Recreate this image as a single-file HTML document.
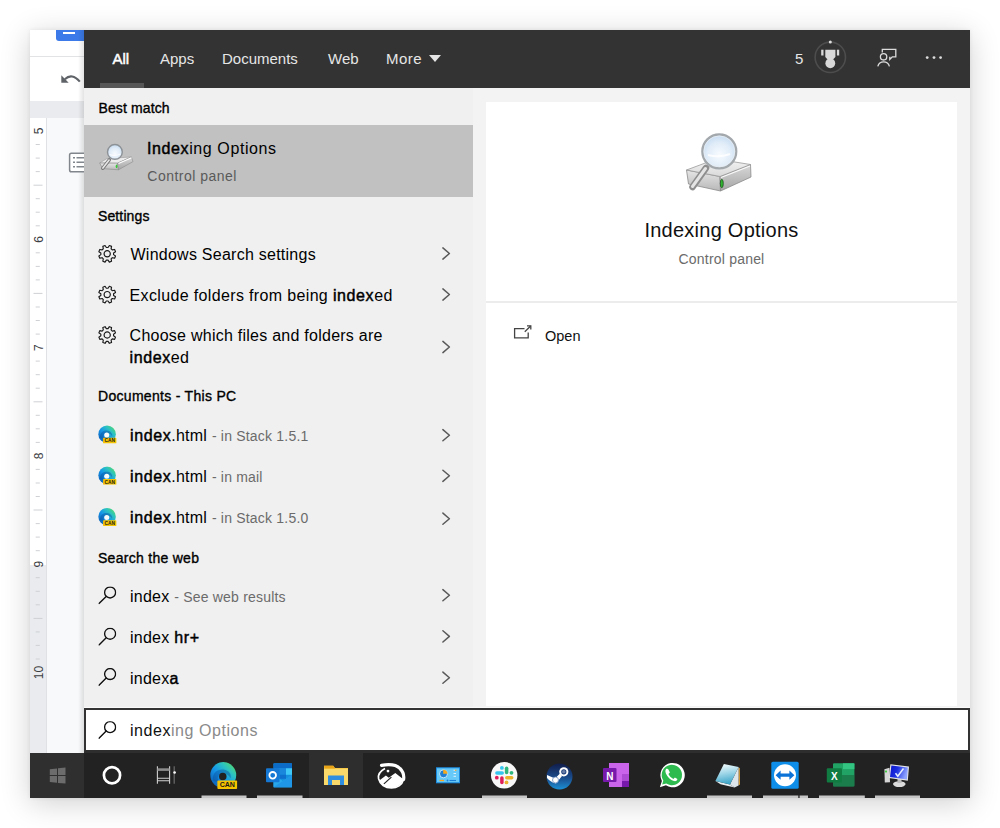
<!DOCTYPE html>
<html><head><meta charset="utf-8">
<style>
*{margin:0;padding:0;box-sizing:border-box}
html,body{width:1000px;height:828px;background:#fff;overflow:hidden;font-family:"Liberation Sans",sans-serif}
.a{position:absolute}
.t{position:absolute;line-height:1;white-space:nowrap}
.sb{font-size:14px;-webkit-text-stroke:0.35px #000;letter-spacing:0.12px;color:#000}
.r{font-size:16px;color:#000;letter-spacing:0.25px}
b{font-weight:400;-webkit-text-stroke:0.45px currentColor;letter-spacing:0.6px}
.g{font-size:14px;color:#6b6b6b;letter-spacing:0.2px}
#win{position:absolute;left:30px;top:30px;width:940px;height:768px;box-shadow:0 0 4px rgba(0,0,0,.07),0 5px 28px rgba(0,0,0,.19)}
</style></head><body>
<div id="win"></div>
<!-- doc background -->
<div class="a" style="left:30px;top:30px;width:54px;height:723px;background:#fff"></div>
<div class="a" style="left:56px;top:30px;width:28px;height:10.5px;background:#3b7ae8;border-bottom-left-radius:3px"></div>
<div class="a" style="left:63px;top:31.5px;width:12px;height:2px;background:#fff"></div>
<div class="a" style="left:30px;top:56px;width:54px;height:1px;background:#e2e3e5"></div>
<div class="a" style="left:30px;top:101px;width:54px;height:17px;background:#e9ebee"></div>
<div class="a" style="left:30px;top:118px;width:16px;height:447px;background:#fff"></div>
<div class="a" style="left:30px;top:565px;width:16px;height:188px;background:#e9ebee"></div>
<div class="a" style="left:46px;top:118px;width:1px;height:635px;background:#dfe1e4"></div>
<div class="a" style="left:47px;top:118px;width:37px;height:635px;background:#f8f9fa"></div>

<div class="a" style="left:78px;top:30px;width:6px;height:723px;background:linear-gradient(to right,rgba(0,0,0,0),rgba(0,0,0,.11))"></div>
<!-- header -->
<div class="a" style="left:84px;top:30px;width:886px;height:58px;background:#333"></div>
<div class="a" style="left:100px;top:83px;width:44px;height:5px;background:#575757"></div>
<div class="t" style="left:112.5px;top:51.3px;font-size:15px;-webkit-text-stroke:0.5px #fff;color:#fff">All</div>
<div class="t" style="left:160px;top:51.3px;font-size:15px;color:#e6e6e6">Apps</div>
<div class="t" style="left:222px;top:51.3px;font-size:15px;color:#e6e6e6">Documents</div>
<div class="t" style="left:328px;top:51.3px;font-size:15px;color:#e6e6e6">Web</div>
<div class="t" style="left:386px;top:51.3px;font-size:15px;color:#e6e6e6;letter-spacing:0.5px">More</div>
<div class="a" style="left:429px;top:55px;width:0;height:0;border-left:6px solid transparent;border-right:6px solid transparent;border-top:7px solid #e6e6e6"></div>
<div class="t" style="left:795px;top:51px;font-size:15px;color:#e6e6e6">5</div>

<!-- panels -->
<div class="a" style="left:84px;top:88px;width:389px;height:619px;background:#f0f0f0"></div>
<div class="a" style="left:473px;top:88px;width:497px;height:619px;background:#f3f3f3"></div>
<div class="a" style="left:486px;top:102px;width:471px;height:604px;background:#fff"></div>
<div class="a" style="left:486px;top:301px;width:471px;height:2px;background:#ececec"></div>
<div class="a" style="left:84px;top:125px;width:389px;height:71.8px;background:#c1c1c1"></div>

<div class="t sb" style="left:98.5px;top:100.5px">Best match</div>
<div class="t r" style="left:147px;top:140.9px;letter-spacing:0.6px"><b>Index</b>ing Options</div>
<div class="t g" style="left:147.3px;top:168.5px;color:#5a5a5a;letter-spacing:0.48px">Control panel</div>
<div class="t sb" style="left:98px;top:208.9px">Settings</div>
<div class="t r" style="left:130.5px;top:247px">Windows Search settings</div>
<div class="t r" style="left:129.6px;top:287.6px;letter-spacing:0.35px">Exclude folders from being <b>index</b>ed</div>
<div class="t r" style="left:129.6px;top:328.1px">Choose which files and folders are</div>
<div class="t r" style="left:129.6px;top:350px"><b>index</b>ed</div>
<div class="t sb" style="left:98px;top:389.4px;letter-spacing:0.3px">Documents - This PC</div>
<div class="t r" style="left:130px;top:427.5px"><b>index</b>.html <span class="g">- in Stack 1.5.1</span></div>
<div class="t r" style="left:130px;top:468.7px"><b>index</b>.html <span class="g">- in mail</span></div>
<div class="t r" style="left:130px;top:510px"><b>index</b>.html <span class="g">- in Stack 1.5.0</span></div>
<div class="t sb" style="left:98px;top:551.4px;letter-spacing:0.28px">Search the web</div>
<div class="t r" style="left:130px;top:588.9px">index <span class="g">- See web results</span></div>
<div class="t r" style="left:130px;top:630.2px">index <b>hr+</b></div>
<div class="t r" style="left:130px;top:670.5px">index<b>a</b></div>

<!-- right panel -->
<div class="t" style="left:486px;width:471px;text-align:center;top:219.9px;font-size:20px;color:#111;letter-spacing:0.25px">Indexing Options</div>
<div class="t g" style="left:486px;width:471px;text-align:center;top:252px">Control panel</div>
<div class="t" style="left:545px;top:328.7px;font-size:14.5px;color:#111">Open</div>

<!-- search box -->
<div class="a" style="left:84px;top:707px;width:886px;height:1px;background:#fafafa"></div><div class="a" style="left:84px;top:708px;width:886px;height:45px;background:#fff;border:2.4px solid #333;border-bottom:3px solid #2e2e2e"></div>
<div class="t r" style="left:130px;top:723.1px;color:#111;letter-spacing:0.55px">index<span style="color:#8a8a8a">ing Options</span></div>

<!-- taskbar -->
<div class="a" style="left:30px;top:753px;width:940px;height:45px;background:#222"></div>
<div class="a" style="left:30px;top:753px;width:54px;height:45px;background:#2f2f2f"></div>
<div class="a" style="left:309px;top:753px;width:54px;height:45px;background:#2e2e2e"></div>
<svg width="1000" height="828" viewBox="0 0 1000 828" style="position:absolute;left:0;top:0" font-family="Liberation Sans"><defs>
<clipPath id="docclip"><rect x="30" y="30" width="54" height="723"/></clipPath>
<linearGradient id="edg" x1="0" y1="1" x2="1" y2="0">
 <stop offset="0" stop-color="#0a4fa8"/><stop offset=".45" stop-color="#1596e8"/><stop offset=".7" stop-color="#2cc3c0"/><stop offset="1" stop-color="#62e04a"/>
</linearGradient>
<radialGradient id="lens" cx=".5" cy=".6" r=".6">
 <stop offset="0" stop-color="#f7fbff"/><stop offset=".6" stop-color="#e0ecf8"/><stop offset="1" stop-color="#c3daf1"/>
</radialGradient>
<linearGradient id="dtop" x1="0" y1="0" x2="0" y2="1"><stop offset="0" stop-color="#f4f4f4"/><stop offset="1" stop-color="#d9d9d9"/></linearGradient>
<linearGradient id="dfl" x1="0" y1="0" x2="0" y2="1"><stop offset="0" stop-color="#e6e6e6"/><stop offset="1" stop-color="#b8b8b8"/></linearGradient>
<linearGradient id="dfr" x1="0" y1="0" x2="0" y2="1"><stop offset="0" stop-color="#d8d8d8"/><stop offset="1" stop-color="#a5a5a5"/></linearGradient>
<linearGradient id="stm" x1="0" y1="0" x2="0" y2="1"><stop offset="0" stop-color="#111d4a"/><stop offset=".55" stop-color="#1a4c8c"/><stop offset="1" stop-color="#1c8fd4"/></linearGradient>
<linearGradient id="npd" x1=".3" y1="0" x2=".5" y2="1"><stop offset="0" stop-color="#f2fafc"/><stop offset=".45" stop-color="#9fd6e8"/><stop offset="1" stop-color="#36a2c6"/></linearGradient>
<linearGradient id="scr" x1="0" y1="0" x2="1" y2=".3"><stop offset="0" stop-color="#0c14c8"/><stop offset=".45" stop-color="#1b2fe0"/><stop offset="1" stop-color="#8fa4ff"/></linearGradient>
<symbol id="gear" viewBox="-9.5 -9.5 19 19"><path d="M0.84,-6.35 L2.15,-8.33 L4.36,-7.41 L3.90,-5.08 L5.08,-3.90 L7.41,-4.36 L8.33,-2.15 L6.35,-0.84 L6.35,0.84 L8.33,2.15 L7.41,4.36 L5.08,3.90 L3.90,5.08 L4.36,7.41 L2.15,8.33 L0.84,6.35 L-0.84,6.35 L-2.15,8.33 L-4.36,7.41 L-3.90,5.08 L-5.08,3.90 L-7.41,4.36 L-8.33,2.15 L-6.35,0.84 L-6.35,-0.84 L-8.33,-2.15 L-7.41,-4.36 L-5.08,-3.90 L-3.90,-5.08 L-4.36,-7.41 L-2.15,-8.33 L-0.84,-6.35Z" fill="none" stroke="#1b1b1b" stroke-width="1.15" stroke-linejoin="round"/><circle r="3.1" fill="none" stroke="#1b1b1b" stroke-width="1.2"/></symbol>
<symbol id="chev" viewBox="0 0 10 14"><path d="M1.9,1.4 L8.4,7 L1.9,12.6" fill="none" stroke="#5a5a5a" stroke-width="1.5" stroke-linecap="round" stroke-linejoin="round"/></symbol>
<symbol id="mag" viewBox="0 0 18 18"><circle cx="11.7" cy="5.95" r="5.5" fill="none" stroke="#111" stroke-width="1.35"/><path d="M7.8,9.9 L0.6,17.1" stroke="#111" stroke-width="1.4" stroke-linecap="round"/></symbol>
<symbol id="edge" viewBox="0 0 28 28">
 <circle cx="13.5" cy="13.8" r="13.2" fill="url(#edg)"/>
 <path d="M3,19 C2,11 9,7 15,8.5 C19.5,9.7 22,13 21,17 C19,13 15,11.5 11.5,12.5 C8,13.5 7,17 9,20.5 C6.5,21 4.5,20.5 3,19Z" fill="#0b4f9e" opacity=".45"/>
 <circle cx="13" cy="15.2" r="3.8" fill="currentColor"/>
 <rect x="7.5" y="19.3" width="20.2" height="8.7" rx="1" fill="#f6c300"/>
 <text x="17.6" y="26.3" font-size="7.2" font-weight="bold" text-anchor="middle" fill="#1a1a1a" font-family="Liberation Sans">CAN</text>
</symbol>
<symbol id="idx" viewBox="0 0 70 62">
 <path d="M2.5,39 L36,45.5 L36.5,60 L4.5,53 Z" fill="url(#dfl)" stroke="#8a8a8a" stroke-width=".8" stroke-linejoin="round"/>
 <path d="M36,45.5 L66.5,33.5 L67,46 L36.5,60 Z" fill="url(#dfr)" stroke="#8a8a8a" stroke-width=".8" stroke-linejoin="round"/>
 <path d="M2.5,39 L32,28 L66.5,33.5 L36,45.5 Z" fill="url(#dtop)" stroke="#9a9a9a" stroke-width=".8" stroke-linejoin="round"/><path d="M37,46.5 L66,35" stroke="#fafafa" stroke-width="1.2"/>
 <ellipse cx="37.8" cy="52.5" rx="1.5" ry="4.2" fill="#2fb52f" stroke="#1d3d1d" stroke-width=".7"/>
 <path d="M22,37 L8.5,56" stroke="#8e8e8e" stroke-width="6.5" stroke-linecap="round"/>
 <path d="M21.5,37.5 L8.5,55.5" stroke="#e4e4e4" stroke-width="3" stroke-linecap="round"/>
 <circle cx="35.3" cy="20.4" r="16.9" fill="url(#lens)" stroke="#a3a8ad" stroke-width="2.4"/><circle cx="35.3" cy="20.4" r="15.5" fill="none" stroke="#e9eef3" stroke-width=".8"/>
 <path d="M24,24 Q35,27 46,23" stroke="#ffffff" stroke-width="2" fill="none" opacity=".8"/>
</symbol>
</defs><g clip-path="url(#docclip)">
<path d="M61.3,75.3 L61.3,82.7 L68.7,82.7 Z" fill="#5f6368"/><path d="M64.8,79.2 Q72,72.5 79.8,81.6" fill="none" stroke="#5f6368" stroke-width="2.1"/>
<rect x="69.6" y="153.3" width="20" height="18.5" rx="1.8" fill="#fff" stroke="#80868b" stroke-width="1.5"/><path d="M73,157.8h2M73,162.3h2M73,166.8h2M76.5,157.8h8M76.5,162.3h8M76.5,166.8h8" stroke="#80868b" stroke-width="1.5"/>
<text transform="translate(43.2,131.0) rotate(-90)" text-anchor="middle" font-size="12" fill="#3c4043">5</text>
<text transform="translate(43.2,239.3) rotate(-90)" text-anchor="middle" font-size="12" fill="#3c4043">6</text>
<text transform="translate(43.2,347.6) rotate(-90)" text-anchor="middle" font-size="12" fill="#3c4043">7</text>
<text transform="translate(43.2,455.9) rotate(-90)" text-anchor="middle" font-size="12" fill="#3c4043">8</text>
<text transform="translate(43.2,564.2) rotate(-90)" text-anchor="middle" font-size="12" fill="#3c4043">9</text>
<text transform="translate(43.2,672.5) rotate(-90)" text-anchor="middle" font-size="12" fill="#3c4043">10</text>
<path d="M35.7,144.5H39.8M35.7,158.1H39.8M35.7,171.6H39.8M33.5,185.2H42.5M35.7,198.7H39.8M35.7,212.2H39.8M35.7,225.8H39.8M35.7,252.8H39.8M35.7,266.4H39.8M35.7,279.9H39.8M33.5,293.4H42.5M35.7,307.0H39.8M35.7,320.5H39.8M35.7,334.1H39.8M35.7,361.1H39.8M35.7,374.7H39.8M35.7,388.2H39.8M33.5,401.8H42.5M35.7,415.3H39.8M35.7,428.8H39.8M35.7,442.4H39.8M35.7,469.4H39.8M35.7,483.0H39.8M35.7,496.5H39.8M33.5,510.0H42.5M35.7,523.6H39.8M35.7,537.1H39.8M35.7,550.7H39.8M35.7,577.7H39.8M35.7,591.3H39.8M35.7,604.8H39.8M33.5,618.4H42.5M35.7,631.9H39.8M35.7,645.4H39.8M35.7,659.0H39.8" stroke="#cfd1d4" stroke-width="1" fill="none"/>
</g>
<circle cx="830.3" cy="57.3" r="15.2" fill="none" stroke="#4d4d4d" stroke-width="1.6"/><circle cx="830.3" cy="41.9" r="1.5" fill="#e0e0e0"/>
<path d="M825.3,49.7 H835.4 V57 L833,59.5 L827.6,59.5 L825.3,57 Z" fill="#d9d9d9"/><circle cx="830.3" cy="63.3" r="4.9" fill="#d9d9d9"/><rect x="821.2" y="49.7" width="2.3" height="5.8" fill="#d9d9d9"/><rect x="836.9" y="49.7" width="2.3" height="5.8" fill="#d9d9d9"/>
<g fill="none" stroke="#dcdcdc" stroke-width="1.3"><path d="M882.3,52.5 V49.4 H895.8 V56.8 H892.3 L889.8,59.4 V56.8"/><circle cx="883.6" cy="56.8" r="3.2"/><path d="M877.8,66.4 A6,6 0 0 1 889.4,66.4"/></g>
<g fill="#dcdcdc"><circle cx="927.2" cy="57.6" r="1.4"/><circle cx="934" cy="57.6" r="1.4"/><circle cx="940.6" cy="57.6" r="1.4"/></g>
<path d="M99.7,163 L107,158.5 L131.3,157 L117.5,163.2 Z" fill="#ececec" stroke="#9a9a9a" stroke-width=".6"/><path d="M99.7,163 L117.5,163.2 L118.5,169.8 L102.5,168.6 Z" fill="url(#dfl)" stroke="#8a8a8a" stroke-width=".6"/><path d="M117.5,163.2 L131.3,157 L133,161.6 L118.5,169.8 Z" fill="url(#dfr)" stroke="#8a8a8a" stroke-width=".6"/><path d="M118.5,163.5 L131.5,157.8" stroke="#fff" stroke-width="1.2"/><ellipse cx="116.6" cy="166.3" rx=".9" ry="1.9" fill="#36c836"/><path d="M109.3,159.9 L102.8,168.3" stroke="#777" stroke-width="3.4" stroke-linecap="round"/><path d="M109.1,160.1 L102.9,168.1" stroke="#e6e6e6" stroke-width="1.6" stroke-linecap="round"/><circle cx="114.9" cy="151.9" r="7.4" fill="url(#lens)" stroke="#8d9297" stroke-width="1.4"/><path d="M109.5,154.5 Q115,156.5 120.5,154" stroke="#fff" stroke-width="1.2" fill="none" opacity=".8"/>
<use href="#idx" x="684" y="131" width="70" height="62"/>
<use href="#gear" x="97.7" y="244.3" width="19" height="19"/>
<use href="#gear" x="97.7" y="285.1" width="19" height="19"/>
<use href="#gear" x="97.7" y="325.5" width="19" height="19"/>
<use href="#chev" x="441" y="246.5" width="10" height="14"/>
<use href="#chev" x="441" y="287.5" width="10" height="14"/>
<use href="#chev" x="441" y="340.0" width="10" height="14"/>
<use href="#chev" x="441" y="428.2" width="10" height="14"/>
<use href="#chev" x="441" y="468.8" width="10" height="14"/>
<use href="#chev" x="441" y="511.7" width="10" height="14"/>
<use href="#chev" x="441" y="588.2" width="10" height="14"/>
<use href="#chev" x="441" y="629.4" width="10" height="14"/>
<use href="#chev" x="441" y="670.7" width="10" height="14"/>
<use href="#edge" x="98.1" y="425" width="18.6" height="18.6" style="color:#fafafa"/>
<use href="#edge" x="98.1" y="466.2" width="18.6" height="18.6" style="color:#fafafa"/>
<use href="#edge" x="98.1" y="507.5" width="18.6" height="18.6" style="color:#fafafa"/>
<use href="#mag" x="98.4" y="586.5" width="18" height="18"/>
<use href="#mag" x="98.4" y="627.8" width="18" height="18"/>
<use href="#mag" x="98.4" y="668.1" width="18" height="18"/>
<use href="#mag" x="98.4" y="721.2" width="18" height="18"/>
<g fill="none" stroke="#444" stroke-width="1.3"><path d="M524.5,328.6 H514.6 V337.9 H528.2 V332.5"/><path d="M524.8,331.8 L530.6,326"/><path d="M527,325.8 H530.8 V329.6"/></g><g fill="#6c6c6c"><path d="M49.8,769.3 L57,768.4 V775.1 H49.8Z"/><path d="M58,768.3 L65.5,767.5 V775.1 H58Z"/><path d="M49.8,776.1 H57 V782.8 L49.8,782Z"/><path d="M58,776.1 H65.5 V783.6 L58,782.9Z"/></g>
<circle cx="112" cy="775.3" r="8.1" fill="none" stroke="#fff" stroke-width="2.7"/>
<g stroke="#d0d0d0" stroke-width="1.1" fill="none"><path d="M157.4,766.3V783.7M169.6,766.3V783.7"/><path d="M157.4,778.3H169.6M157.4,780.8H169.6"/></g><rect x="157.4" y="768.3" width="12.2" height="2.6" fill="#8c8c8c"/><path d="M174.2,766.3V783.7" stroke="#6a6a6a" stroke-width="1.2"/><circle cx="174.6" cy="772.5" r="1.3" fill="#fff"/>
<use href="#edge" x="210" y="761.5" width="27.5" height="27.5" style="color:#222"/>
<rect x="273.5" y="763.3" width="18.5" height="24" rx="1" fill="#1490df"/><rect x="273.5" y="763.3" width="18.5" height="5" fill="#0b6bc7"/><rect x="279.5" y="768.3" width="6.5" height="6.5" fill="#1a86dc"/><rect x="286" y="768.3" width="6" height="6.5" fill="#3fc7f5"/><rect x="279.5" y="774.8" width="6.5" height="4" fill="#0f6fcc"/><path d="M273.5,775 L282.8,781 L292,775 V787.3 H273.5Z" fill="#28a8ea"/><path d="M282.8,781 L292,775 V787.3 H273.5Z" fill="#1f96e6"/><rect x="266" y="768.3" width="13.5" height="14" rx="1" fill="#1578d4"/><circle cx="272.7" cy="775.3" r="3.3" fill="none" stroke="#fff" stroke-width="1.8"/>
<path d="M324,765.8 h9 l2,2.2 h13 v17 h-24z" fill="#f7c948"/><path d="M324,765.8 h9.5 l1.5,2.6 h-10.5z" fill="#e8a317"/><rect x="324" y="769" width="24" height="16" fill="#fad96b"/><path d="M328,775.5 h16 v9.5 h-4 v-5 h-8 v5 h-4z" fill="#2f8ee0"/>
<path d="M381.5,765.3 C388,764.2 396,764.3 400,768.5 C403,771.5 404.2,775.5 403.6,779.5" fill="none" stroke="#fff" stroke-width="3.2" stroke-linecap="round"/><path d="M385,768.6 C380.5,771 377.8,775 378.6,778.8 C380,784.5 385,788 391.5,788 C397,788 402,785 403.6,779.5" fill="none" stroke="#fff" stroke-width="1.7"/><path d="M379.3,780.6 L385.9,775.4 L388.8,777.8 L395.3,773 L403.3,779.3 C402,784.5 397,788 391.5,788 C385.5,788 381,785 379.3,780.6 Z" fill="#fff"/><path d="M383.9,783.9 L391.4,777.1" stroke="#222" stroke-width="1.2"/><circle cx="388" cy="771.1" r="1.4" fill="#fff"/>
<rect x="436.5" y="767.8" width="23" height="15" fill="#66c9f7" stroke="#1a8ae0" stroke-width="1"/><circle cx="443.5" cy="773.8" r="4" fill="#1d7fd6" stroke="#e6f6ff" stroke-width=".8"/><path d="M443.2,773.8 V769.8 A4,4 0 0 1 447.5,773.8Z" fill="#f6a81c"/><path d="M439.5,780.5h4.5" stroke="#f5a623" stroke-width="1.3"/><circle cx="447.5" cy="780.5" r=".9" fill="#1d7fd6"/><path d="M449.5,780.5h6.5" stroke="#1d7fd6" stroke-width="1.1"/><path d="M453.5,770.3h2.5M453.5,773.5h2.5M453.5,776.3h2.5" stroke="#d9f1ff" stroke-width="1"/><circle cx="455.6" cy="770.3" r=".8" fill="#f5a623"/>
<circle cx="504.2" cy="775.3" r="13.2" fill="#f8f8f8"/><g stroke-linecap="round" stroke-width="3.5"><path d="M496.9,772.9h5.3" stroke="#36c5f0"/><path d="M506.6,768.2v4.2" stroke="#2eb67d"/><path d="M506.8,777.8h4.9" stroke="#ecb22e"/><path d="M501.9,778v4.5" stroke="#e01e5a"/></g><circle cx="501.9" cy="767.9" r="1.9" fill="#36c5f0"/><circle cx="511.5" cy="772.8" r="1.9" fill="#2eb67d"/><circle cx="506.5" cy="782.4" r="1.9" fill="#ecb22e"/><circle cx="496.8" cy="777.7" r="1.9" fill="#e01e5a"/>
<circle cx="559.5" cy="776.5" r="13" fill="url(#stm)"/><circle cx="563.8" cy="771.8" r="4.6" fill="#fff"/><circle cx="563.8" cy="771.8" r="2.6" fill="#1a3a78"/><circle cx="563.8" cy="771.8" r="1.8" fill="#fff" opacity=".35"/><path d="M547,775 L555,778.5 L560,773.5 L562,776 L556,783.5 C552,783 549,780 547,778Z" fill="#fff"/><circle cx="555.5" cy="780" r="3" fill="#fff" stroke="#6b8cc0" stroke-width=".8"/>
<rect x="609" y="763" width="20" height="24" fill="#ca64ea"/><rect x="622" y="774" width="7" height="7" fill="#ae4bd5"/><rect x="622" y="781" width="7" height="6" fill="#7719aa"/><rect x="603" y="768" width="13.5" height="14" rx="1" fill="#7719aa"/><text x="609.8" y="779.6" font-size="10" font-weight="bold" fill="#fff" text-anchor="middle" font-family="Liberation Sans">N</text>
<g transform="translate(-1.6,0)"><path d="M661.5,787.3 L663.5,781 A12.2,12.2 0 1 1 667.5,785.3 Z" fill="#fff"/><path d="M663.8,784.4 L664.9,780.6 A10.2,10.2 0 1 1 667.9,783.6 Z" fill="#2dba4e"/><path d="M668.5,768.5 C667,769 666.5,771 667.5,773.5 C669,777 672,780 675.5,781 C677.5,781.5 679,780.5 679,779 L676.5,777.5 L675,779 C673,778 671,776 670,774 L671.5,772.5 L670,769.5Z" fill="#fff"/></g>
<path d="M738.5,767.5 L739.8,768 L740,784.5 L738.5,785.5Z" fill="#d9a03a"/><path d="M738.6,767 L738.5,785.5 L734.6,787.6 L730,784.5Z" fill="#dde6ea"/><path d="M715.4,781 L730,784.5 L734.6,787.6 L720.5,784.2Z" fill="#e8eef0"/><path d="M723.9,764.1 L738.6,767 L730,784.5 L715.4,781Z" fill="url(#npd)"/>
<rect x="771.3" y="761.7" width="27.4" height="27" rx="1.5" fill="#0e8ee9"/><circle cx="785" cy="775.2" r="11" fill="#fff"/><path d="M775.6,775.2 L780.6,770.6 V773.6 H789.4 V770.6 L794.4,775.2 L789.4,779.8 V776.8 H780.6 V779.8Z" fill="#0b72d8"/>
<rect x="833" y="763.3" width="21.4" height="23.2" rx="1" fill="#21a366"/><rect x="843" y="763.3" width="11.4" height="5.8" fill="#33c481"/><rect x="833" y="775" width="21.4" height="11.5" fill="#185c37" opacity=".55"/><rect x="826.8" y="768.2" width="15.2" height="14.3" rx="1" fill="#107c41"/><text x="834.4" y="779.6" font-size="10" font-weight="bold" fill="#fff" text-anchor="middle" font-family="Liberation Sans">X</text>
<path d="M884.4,769.2 L889.5,767.8 L890,782.3 L884.8,782.6Z" fill="#d6d6d6"/><rect x="885" y="770.6" width="2" height="1.8" fill="#4c4"/><ellipse cx="899.3" cy="784.1" rx="6.3" ry="2.9" fill="#dcdcdc"/><path d="M897.5,779 h4 v4 h-4z" fill="#bdbdbd"/><path d="M890.4,764.2 L909,766.6 L907.8,780.8 L888.9,778.1Z" fill="#e6e6e6"/><path d="M891.4,765.4 L907.9,767.6 L906.9,779.6 L890,777.1Z" fill="url(#scr)"/><path d="M895.5,773.3 L897.8,776.3 L903.5,768.5" stroke="#e8f0ff" stroke-width="1.5" fill="none"/>
<rect x="201.5" y="795.5" width="45.0" height="2.5" fill="#c6c6c6"/>
<rect x="257" y="795.5" width="45.5" height="2.5" fill="#c6c6c6"/>
<rect x="482" y="795.5" width="45.0" height="2.5" fill="#c6c6c6"/>
<rect x="707" y="795.5" width="45.0" height="2.5" fill="#c6c6c6"/>
<rect x="763" y="795.5" width="35.3" height="2.5" fill="#c6c6c6"/>
<rect x="799.6" y="795.5" width="8.4" height="2.5" fill="#c6c6c6"/>
<rect x="819" y="795.5" width="45.8" height="2.5" fill="#c6c6c6"/>
<rect x="875" y="795.5" width="45.0" height="2.5" fill="#c6c6c6"/></svg>
</body></html>
